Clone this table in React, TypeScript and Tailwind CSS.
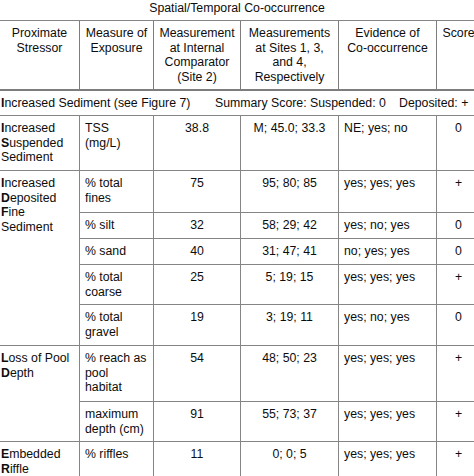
import React from "react";

const B = ({ c }: { c: string }) => <span className="font-bold">{c}</span>;

const cellL = "border-l border-b border-[#858585] align-top pt-[5px] px-[5px] text-left";
const cellC = "border-l border-b border-[#858585] align-top pt-[5px] px-[2px] text-center";
const cell1 = "border-b border-[#858585] align-top pt-[5px] pl-[1px] pr-[2px] text-left";

type Row = { h: string; m: React.ReactNode; i: string; s: string; e: string; sc: string };

export default function App() {
  const rows1: Row[] = [
    { h: "h-[42px]", m: <>% total<br />fines</>, i: "75", s: "95; 80; 85", e: "yes; yes; yes", sc: "+" },
    { h: "h-[26px]", m: "% silt", i: "32", s: "58; 29; 42", e: "yes; no; yes", sc: "0" },
    { h: "h-[26px]", m: "% sand", i: "40", s: "31; 47; 41", e: "no; yes; yes", sc: "0" },
    { h: "h-[40px]", m: <>% total<br />coarse</>, i: "25", s: "5; 19; 15", e: "yes; yes; yes", sc: "+" },
    { h: "h-[41px]", m: <>% total<br />gravel</>, i: "19", s: "3; 19; 11", e: "yes; no; yes", sc: "0" },
  ];
  const rows2: Row[] = [
    { h: "h-[56px]", m: <>% reach as<br />pool<br />habitat</>, i: "54", s: "48; 50; 23", e: "yes; yes; yes", sc: "+" },
    { h: "h-[40px]", m: <>maximum<br />depth (cm)</>, i: "91", s: "55; 73; 37", e: "yes; yes; yes", sc: "+" },
  ];
  const rest = (r: Row) => (
    <>
      <td className={cellL}>{r.m}</td>
      <td className={cellC}>{r.i}</td>
      <td className={cellC}>{r.s}</td>
      <td className={cellL}>{r.e}</td>
      <td className={cellC}>{r.sc}</td>
    </>
  );
  return (
    <div className="w-[474px] h-[476px] overflow-hidden bg-white text-[#0d0d0d] font-['Liberation_Sans',Arial,sans-serif] text-[12.3px] leading-[14.5px]">
      <table className="w-[480px] table-fixed border-separate border-spacing-0">
        <colgroup>
          <col className="w-[79px]" />
          <col className="w-[74px]" />
          <col className="w-[87px]" />
          <col className="w-[98px]" />
          <col className="w-[98px]" />
          <col className="w-[44px]" />
        </colgroup>
        <tbody>
          <tr className="h-[21px]">
            <td colSpan={6} className="border-b border-[#858585] text-center align-top pt-[1px] pr-[6px]">
              Spatial/Temporal Co-occurrence
            </td>
          </tr>
          <tr className="h-[70px]">
            <td className="border-b-2 border-[#7d7d7d] align-top pt-[5px] text-center">Proximate<br />Stressor</td>
            <td className="border-l border-b-2 border-[#7d7d7d] align-top pt-[5px] text-center">Measure of<br />Exposure</td>
            <td className="border-l border-b-2 border-[#7d7d7d] align-top pt-[5px] text-center">Measurement<br />at Internal<br />Comparator<br />(Site 2)</td>
            <td className="border-l border-b-2 border-[#7d7d7d] align-top pt-[5px] text-center">Measurements<br />at Sites 1, 3,<br />and 4,<br />Respectively</td>
            <td className="border-l border-b-2 border-[#7d7d7d] align-top pt-[5px] text-center">Evidence of<br />Co-occurrence</td>
            <td className="border-l border-b-2 border-[#7d7d7d] align-top pt-[5px] text-center">Score</td>
          </tr>
          <tr className="h-[25px]">
            <td colSpan={6} className="border-b border-[#858585] align-top pt-[5px] pl-[1px]">
              <div className="flex">
                <span className="w-[214px] shrink-0"><B c="I" />ncreased Sediment (see Figure 7)</span>
                <span className="w-[184px] shrink-0">Summary Score: Suspended: 0</span>
                <span>Deposited: +</span>
              </div>
            </td>
          </tr>
          <tr className="h-[55px]">
            <td className={cell1}><B c="I" />ncreased<br /><B c="S" />uspended<br />Sediment</td>
            <td className={cellL}>TSS<br />(mg/L)</td>
            <td className={cellC}>38.8</td>
            <td className={cellC}>M; 45.0; 33.3</td>
            <td className={cellL}>NE; yes; no</td>
            <td className={cellC}>0</td>
          </tr>
          {rows1.map((r, k) => (
            <tr key={k} className={r.h}>
              {k === 0 && (
                <td rowSpan={5} className={cell1}>
                  <B c="I" />ncreased<br /><B c="D" />eposited<br /><B c="F" />ine<br />Sediment
                </td>
              )}
              {rest(r)}
            </tr>
          ))}
          {rows2.map((r, k) => (
            <tr key={k} className={r.h}>
              {k === 0 && (
                <td rowSpan={2} className={cell1}>
                  <B c="L" />oss of Pool<br /><B c="D" />epth
                </td>
              )}
              {rest(r)}
            </tr>
          ))}
          <tr className="h-[50px]">
            <td className={cell1}><B c="E" />mbedded<br /><B c="R" />iffle</td>
            {rest({ h: "", m: "% riffles", i: "11", s: "0; 0; 5", e: "yes; yes; yes", sc: "+" })}
          </tr>
        </tbody>
      </table>
    </div>
  );
}
